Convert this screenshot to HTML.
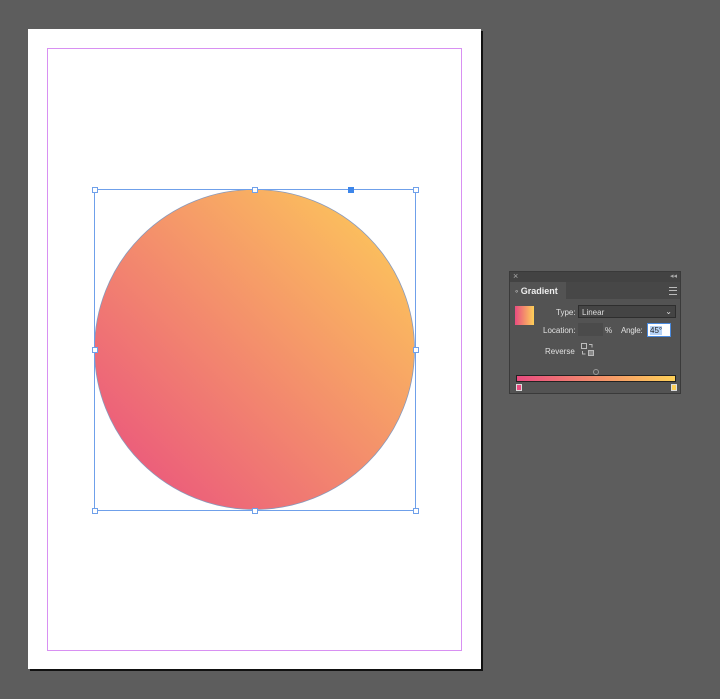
<!DOCTYPE html>
<html><head><style>
body{margin:0;width:720px;height:699px;background:#5d5d5d;position:relative;overflow:hidden;font-family:"Liberation Sans",sans-serif}
.abs{position:absolute}
.pg{left:28px;top:29px;width:453px;height:640px;background:#fff;box-shadow:2px 2px 0 #111}
.mg{left:47px;top:48px;width:415px;height:603px;border:1px solid #d890f2;box-sizing:border-box}
.h{width:4px;height:4px;border:1px solid #6fa0ea;background:#fff}
.panel{left:509px;top:271px;width:172px;height:123px;background:#535353;border:1px solid #3a3a3a;box-sizing:border-box;color:#ddd;font-size:8px}
.lbl{color:#e0e0e0}
</style></head><body>
<div class="abs pg"></div>
<div class="abs mg"></div>
<svg class="abs" style="left:0;top:0" width="720" height="699">
<defs><linearGradient id="g" x1="0" y1="1" x2="1" y2="0"><stop offset="0" stop-color="#e94c80"/><stop offset="1" stop-color="#fed058"/></linearGradient></defs>
<circle cx="254.5" cy="349.5" r="160" fill="url(#g)" stroke="#8899bb" stroke-width="0.8"/>
<rect x="94.5" y="189.5" width="321" height="321" fill="none" stroke="#6fa0ea" stroke-width="1"/>
</svg>
<div class="abs h" style="left:92px;top:187px"></div>
<div class="abs h" style="left:252px;top:187px"></div>
<div class="abs h" style="left:413px;top:187px"></div>
<div class="abs" style="left:348px;top:187px;width:6px;height:6px;background:#3d86ea"></div>
<div class="abs h" style="left:92px;top:347px"></div>
<div class="abs h" style="left:413px;top:347px"></div>
<div class="abs h" style="left:92px;top:508px"></div>
<div class="abs h" style="left:252px;top:508px"></div>
<div class="abs h" style="left:413px;top:508px"></div>

<div class="abs panel">
 <div class="abs" style="left:0;top:0;width:170px;height:10px;background:#434343"></div>
 <div class="abs" style="left:3px;top:-1px;font-size:9px;color:#aaa">×</div>
 <div class="abs" style="left:160px;top:0px;font-size:7px;color:#aaa">◂◂</div>
 <div class="abs" style="left:0;top:10px;width:170px;height:17px;background:#474747"></div>
 <div class="abs" style="left:0;top:10px;width:56px;height:17px;background:#535353"></div>
 <div class="abs" style="left:5px;top:14px;font-size:9px;font-weight:bold;color:#eee">◦ Gradient</div>
 <div class="abs" style="left:159px;top:15px;width:8px;height:6px;border-top:1px solid #bbb;border-bottom:1px solid #bbb"><div style="margin-top:2px;height:1px;background:#bbb"></div></div>
 <div class="abs" style="left:5px;top:34px;width:19px;height:19px;background:linear-gradient(90deg,#e94c80,#fed058)"></div>
 <div class="abs lbl" style="left:46px;top:36px">Type:</div>
 <div class="abs" style="left:68px;top:33px;width:98px;height:13px;background:#444;border:1px solid #2e2e2e;box-sizing:border-box;padding:2px 0 0 3px">Linear<span style="position:absolute;right:3px;top:1px">⌄</span></div>
 <div class="abs lbl" style="left:33px;top:54px">Location:</div>
 <div class="abs" style="left:68px;top:51px;width:25px;height:13px;background:#4b4b4b"></div>
 <div class="abs lbl" style="left:95px;top:54px">%</div>
 <div class="abs lbl" style="left:111px;top:54px;letter-spacing:-0.2px">Angle:</div>
 <div class="abs" style="left:137px;top:51px;width:24px;height:14px;background:#fff;border:1px solid #4a8be0;box-sizing:border-box;color:#222;padding:2px 0 0 2px"><span style="background:#b6d3f7">45°</span></div>
 <div class="abs lbl" style="left:35px;top:75px">Reverse</div>
 <svg class="abs" style="left:71px;top:71px" width="14" height="13"><rect x="0.5" y="0.5" width="5" height="5" fill="none" stroke="#bbb"/><rect x="7.5" y="7.5" width="5" height="5" fill="#888" stroke="#bbb"/><path d="M8 1.5h3v3M1.5 8v3h3" fill="none" stroke="#bbb"/></svg>
 <div class="abs" style="left:83px;top:97px;width:4px;height:4px;border:1px solid #999;border-radius:50%"></div>
 <div class="abs" style="left:6px;top:103px;width:160px;height:7px;background:linear-gradient(90deg,#e94c80,#fed058);border:1px solid #222;box-sizing:border-box"></div>
 <div class="abs" style="left:6px;top:112px;width:4px;height:5px;background:#e94c80;border:1px solid #ddd"></div>
 <div class="abs" style="left:161px;top:112px;width:4px;height:5px;background:#fed058;border:1px solid #ddd"></div>
</div>
</body></html>
